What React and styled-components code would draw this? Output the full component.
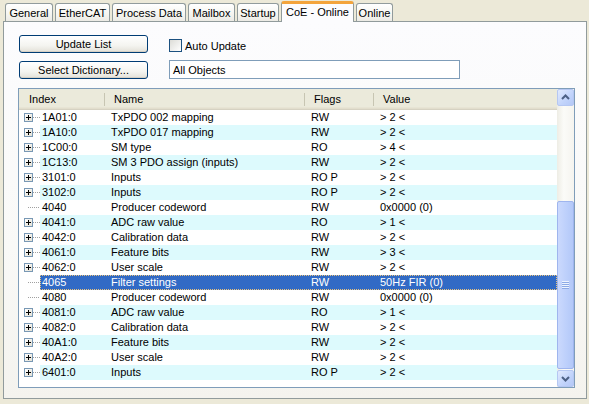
import React from "react";
import styled, { createGlobalStyle } from "styled-components";

const rows = [
  { index: "1A01:0", name: "TxPDO 002 mapping", flags: "RW", value: "> 2 <", sub: true },
  { index: "1A10:0", name: "TxPDO 017 mapping", flags: "RW", value: "> 2 <", sub: true },
  { index: "1C00:0", name: "SM type", flags: "RO", value: "> 4 <", sub: true },
  { index: "1C13:0", name: "SM 3 PDO assign (inputs)", flags: "RW", value: "> 2 <", sub: true },
  { index: "3101:0", name: "Inputs", flags: "RO P", value: "> 2 <", sub: true },
  { index: "3102:0", name: "Inputs", flags: "RO P", value: "> 2 <", sub: true },
  { index: "4040", name: "Producer codeword", flags: "RW", value: "0x0000 (0)" },
  { index: "4041:0", name: "ADC raw value", flags: "RO", value: "> 1 <", sub: true },
  { index: "4042:0", name: "Calibration data", flags: "RW", value: "> 2 <", sub: true },
  { index: "4061:0", name: "Feature bits", flags: "RW", value: "> 3 <", sub: true },
  { index: "4062:0", name: "User scale", flags: "RW", value: "> 2 <", sub: true },
  { index: "4065", name: "Filter settings", flags: "RW", value: "50Hz FIR (0)", selected: true },
  { index: "4080", name: "Producer codeword", flags: "RW", value: "0x0000 (0)" },
  { index: "4081:0", name: "ADC raw value", flags: "RO", value: "> 1 <", sub: true },
  { index: "4082:0", name: "Calibration data", flags: "RW", value: "> 2 <", sub: true },
  { index: "40A1:0", name: "Feature bits", flags: "RW", value: "> 2 <", sub: true },
  { index: "40A2:0", name: "User scale", flags: "RW", value: "> 2 <", sub: true },
  { index: "6401:0", name: "Inputs", flags: "RO P", value: "> 2 <", sub: true },
];

const tabs = [
  { label: "General", w: 48 },
  { label: "EtherCAT", w: 55 },
  { label: "Process Data", w: 74 },
  { label: "Mailbox", w: 47 },
  { label: "Startup", w: 42 },
  { label: "CoE - Online", w: 73, active: true },
  { label: "Online", w: 37 },
];

// scroll state of the list
const TRACK = 264;
const totalRows = 48;
const firstRow = 17;
const thumbHeight = Math.round((TRACK * 30.5) / totalRows);
const thumbTop = Math.round((TRACK * firstRow) / totalRows) + 1;

function App() {
  return (
    <>
      <GlobalStyle />
      <Window>
        <TabStrip>
          {tabs.map((t) => (
            <Tab key={t.label} $w={t.w} $active={t.active}>
              {t.label}
            </Tab>
          ))}
        </TabStrip>
        <Panel>
          <Controls>
            <XpButton>Update List</XpButton>
            <CheckRow>
              <CheckBox />
              <span>Auto Update</span>
            </CheckRow>
            <XpButton $end>Select Dictionary...</XpButton>
            <TextField>All Objects</TextField>
          </Controls>
          <ListView>
            <ListMain>
              <Header>
                <HeaderCell $pad={10}>Index</HeaderCell>
                <HeaderCell $pad={9}>Name</HeaderCell>
                <HeaderCell $pad={9}>Flags</HeaderCell>
                <HeaderCell $pad={9} $last>Value</HeaderCell>
              </Header>
              {rows.map((r, i) => (
                <Row key={r.index}>
                  <Gutter $pad={r.sub ? 5 : 9}>
                    {r.sub && (
                      <Expander>
                        <svg width="5" height="5" viewBox="0 0 5 5">
                          <path d="M0 2.5H5M2.5 0V5" stroke="#000" strokeWidth="1" />
                        </svg>
                      </Expander>
                    )}
                    <TreeLine $w={r.sub ? 7 : 11} />
                  </Gutter>
                  <RowBody $stripe={i % 2 === 1} $selected={r.selected}>
                    <Cell $pad={2}>{r.index}</Cell>
                    <Cell>{r.name}</Cell>
                    <Cell>{r.flags}</Cell>
                    <Cell>{r.value}</Cell>
                  </RowBody>
                </Row>
              ))}
            </ListMain>
            <ScrollBar>
              <ArrowButton>
                <svg width="15" height="15" viewBox="0 0 15 15">
                  <polyline points="4,9 7.5,5.5 11,9" fill="none" stroke="#4d6185" strokeWidth="2" />
                </svg>
              </ArrowButton>
              <Track>
                <Thumb style={{ marginTop: thumbTop, height: thumbHeight }}>
                  <Grip />
                </Thumb>
              </Track>
              <ArrowButton>
                <svg width="15" height="15" viewBox="0 0 15 15">
                  <polyline points="4,6 7.5,9.5 11,6" fill="none" stroke="#4d6185" strokeWidth="2" />
                </svg>
              </ArrowButton>
            </ScrollBar>
          </ListView>
        </Panel>
      </Window>
    </>
  );
}

const GlobalStyle = createGlobalStyle`
  html, body {
    margin: 0;
    background: #ece9d8;
  }
  body {
    font-family: "Liberation Sans", Arial, sans-serif;
    font-size: 11px;
    color: #000;
  }
`;

const Window = styled.div`
  width: 589px;
  height: 404px;
  box-sizing: border-box;
  padding: 1px 2px 0 3px;
  background: #ece9d8;
  display: flex;
  flex-direction: column;
`;

const TabStrip = styled.div`
  display: flex;
  align-items: flex-end;
  gap: 2px;
  height: 20px;
  padding-left: 2px;
`;

const Tab = styled.div`
  position: relative;
  z-index: ${(p) => (p.$active ? 2 : 0)};
  box-sizing: border-box;
  width: ${(p) => p.$w}px;
  height: ${(p) => (p.$active ? 21 : 18)}px;
  margin-bottom: ${(p) => (p.$active ? -1 : 0)}px;
  border: 1px solid #919b9c;
  border-bottom: none;
  border-top: ${(p) => (p.$active ? "3px solid #f3a43c" : "1px solid #919b9c")};
  border-radius: 3px 3px 0 0;
  background: ${(p) =>
    p.$active ? "#fcfcfe" : "linear-gradient(#ffffff, #f7f7f3 50%, #ecebe5)"};
  display: flex;
  justify-content: center;
  align-items: center;
  padding-bottom: ${(p) => (p.$active ? 3 : 0)}px;
  white-space: nowrap;
`;

const Panel = styled.div`
  width: 584px;
  height: 378px;
  box-sizing: border-box;
  border: 1px solid #919b9c;
  background: linear-gradient(#fcfcfe, #f9f9f7 60%, #f4f3ee);
  padding: 13px 0 0 14px;
`;

const Controls = styled.div`
  display: grid;
  grid-template-columns: 129px 291px;
  grid-template-rows: 18px 19px;
  column-gap: 21px;
  row-gap: 7px;
  margin-left: 1px;
`;

const XpButton = styled.div`
  box-sizing: border-box;
  height: 18px;
  align-self: ${(p) => (p.$end ? "end" : "start")};
  border: 1px solid #003c74;
  border-radius: 3px;
  background: linear-gradient(#ffffff, #f4f4f0 60%, #e3e1d8);
  box-shadow: inset 0 -1px 0 #d6d0c5;
  display: flex;
  justify-content: center;
  align-items: center;
`;

const CheckRow = styled.div`
  display: flex;
  align-items: center;
  gap: 3px;
  height: 18px;
  padding-top: 3px;
  box-sizing: border-box;
`;

const CheckBox = styled.div`
  width: 13px;
  height: 13px;
  box-sizing: border-box;
  border: 1px solid #1c5180;
  background: linear-gradient(135deg, #dcdcd7, #ffffff);
`;

const TextField = styled.div`
  box-sizing: border-box;
  border: 1px solid #7f9db9;
  background: #fff;
  padding-left: 3px;
  display: flex;
  align-items: center;
`;

const ListView = styled.div`
  margin-top: 9px;
  width: 557px;
  height: 300px;
  box-sizing: border-box;
  border: 1px solid #7f9db9;
  background: #fff;
  display: flex;
`;

const ListMain = styled.div`
  flex: 1;
  display: flex;
  flex-direction: column;
`;

const Header = styled.div`
  display: grid;
  grid-template-columns: 86px 200px 69px 1fr;
  height: 21px;
  background: #ebeadb;
  box-shadow: inset 0 -1px 0 #d6d2c2, inset 0 -2px 0 #e2decd, inset 0 -3px 0 #e7e4d4;
`;

const HeaderCell = styled.div`
  padding-left: ${(p) => p.$pad}px;
  line-height: 20px;
  background: ${(p) =>
    p.$last ? "none" : "linear-gradient(#c7c5b2, #c7c5b2) right 4px / 1px 13px no-repeat"};
`;

const Row = styled.div`
  display: flex;
  height: 15px;
  line-height: 15px;
`;

const Gutter = styled.div`
  width: 21px;
  box-sizing: border-box;
  padding-left: ${(p) => p.$pad}px;
  display: flex;
  align-items: center;
`;

const Expander = styled.div`
  width: 9px;
  height: 9px;
  box-sizing: border-box;
  border: 1px solid #7898b5;
  background: linear-gradient(135deg, #ffffff, #e3e0d4);
  display: flex;
  justify-content: center;
  align-items: center;
  svg {
    display: block;
  }
`;

const TreeLine = styled.div`
  width: ${(p) => p.$w}px;
  border-top: 1px dotted #a0a0a0;
`;

const RowBody = styled.div`
  flex: 1;
  display: grid;
  grid-template-columns: 65px 200px 69px 1fr;
  background: ${(p) => (p.$selected ? "#316ac5" : p.$stripe ? "#ddfafd" : "#ffffff")};
  color: ${(p) => (p.$selected ? "#ffffff" : "#000000")};
  outline: ${(p) => (p.$selected ? "1px dotted #e9c37c" : "none")};
  outline-offset: -1px;
`;

const Cell = styled.div`
  padding-left: ${(p) => p.$pad ?? 6}px;
  white-space: nowrap;
  overflow: hidden;
`;

const ScrollBar = styled.div`
  width: 17px;
  display: flex;
  flex-direction: column;
  background: linear-gradient(90deg, #eeede5, #fbfbf8 40%, #f5f4ef);
`;

const ArrowButton = styled.div`
  height: 17px;
  box-sizing: border-box;
  border: 1px solid #b5c7f2;
  border-radius: 2px;
  background: linear-gradient(135deg, #e1eafe, #c1d3fb 60%, #b4c8f6);
  display: flex;
  justify-content: center;
  align-items: center;
  svg {
    display: block;
  }
`;

const Track = styled.div`
  flex: 1;
  display: flex;
  flex-direction: column;
`;

const Thumb = styled.div`
  box-sizing: border-box;
  border: 1px solid #9fb5ee;
  border-radius: 2px;
  background: linear-gradient(90deg, #cbd9fd, #bccffb 60%, #b3c8f8);
  display: flex;
  justify-content: center;
  align-items: center;
`;

const Grip = styled.div`
  width: 7px;
  height: 8px;
  background: repeating-linear-gradient(#eef4fe 0 1px, #8caae6 1px 2px);
`;

export default App;
